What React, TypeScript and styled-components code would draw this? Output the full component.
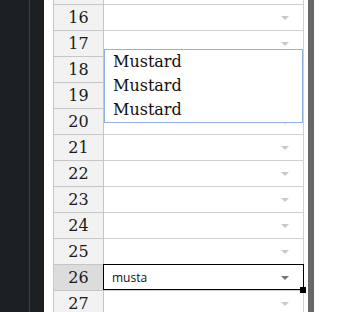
import React, { FC } from "react";
import styled, { createGlobalStyle } from "styled-components";

// row 15 is only a sliver above the fold, its number is off-screen
const rows = [15, 16, 17, 18, 19, 20, 21, 22, 23, 24, 25, 26, 27];
const firstVisible = 16;
const activeRow = 26;
const options = ["Mustard", "Mustard", "Mustard"];

const App: FC = () => {
  return (
    <>
      <GlobalStyle />
      <Page>
        <SidePanel>
          <PanelDivider />
        </SidePanel>
        <Sheet>
          {rows.map((n) => (
            <Row key={n}>
              <RowHeader active={n === activeRow}>
                {n >= firstVisible ? n : ""}
              </RowHeader>
              <Cell>
                {n === activeRow ? <CellText>musta</CellText> : <span />}
                <Arrow active={n === activeRow} />
                {n === activeRow && (
                  <ActiveFrame>
                    <FillHandle />
                  </ActiveFrame>
                )}
              </Cell>
            </Row>
          ))}
          <Suggestions>
            {options.map((o, i) => (
              <Option key={i}>{o}</Option>
            ))}
          </Suggestions>
        </Sheet>
        <ScrollBar />
      </Page>
    </>
  );
};

export default App;

const GlobalStyle = createGlobalStyle`
  html, body {
    margin: 0;
    padding: 0;
    background: #ffffff;
    overflow: hidden;
  }
  * {
    box-sizing: border-box;
  }
`;

const Page = styled.div`
  display: flex;
  align-items: flex-start;
  width: 351px;
  height: 312px;
  overflow: hidden;
`;

const SidePanel = styled.div`
  display: flex;
  width: 44px;
  height: 312px;
  background: #1d2023;
  flex-shrink: 0;
`;

const PanelDivider = styled.div`
  width: 1px;
  height: 100%;
  margin-left: 29px;
  background: #3a3d41;
`;

const Sheet = styled.div`
  position: relative;
  margin-left: 9px;
  margin-top: -22px;
  width: 251px;
  flex-shrink: 0;
`;

const Row = styled.div`
  display: flex;
  height: 26px;
`;

const RowHeader = styled.div<{ active?: boolean }>`
  width: 51px;
  height: 26px;
  border: 1px solid #c6c6c6;
  border-bottom: none;
  background: ${(p) => (p.active ? "#dcdcdc" : "#f2f2f2")};
  display: flex;
  align-items: center;
  justify-content: center;
  font-family: "DejaVu Serif", serif;
  font-size: 16px;
  line-height: 25px;
  color: #1a1a1a;
`;

const Cell = styled.div`
  position: relative;
  width: 200px;
  height: 26px;
  border-top: 1px solid #d0d0d0;
  border-right: 1px solid #d0d0d0;
  background: #ffffff;
  display: flex;
  align-items: center;
  justify-content: space-between;
  padding: 0 14px 0 8px;
`;

const CellText = styled.span`
  font-family: "Open Sans", sans-serif;
  font-size: 12px;
  line-height: 25px;
  color: #111111;
`;

const Arrow = styled.span<{ active?: boolean }>`
  width: 0;
  height: 0;
  border-left: 4px solid transparent;
  border-right: 4px solid transparent;
  border-top: 4px solid ${(p) => (p.active ? "#767676" : "#c9c9c9")};
`;

const ActiveFrame = styled.div`
  position: absolute;
  z-index: 2;
  left: -1px;
  top: -1px;
  width: 201px;
  height: 26px;
  border: 1px solid #000000;
  pointer-events: none;
`;

const FillHandle = styled.div`
  position: absolute;
  left: 196px;
  top: 22px;
  width: 6px;
  height: 6px;
  background: #000000;
`;

const Suggestions = styled.div`
  position: absolute;
  z-index: 3;
  left: 51px;
  top: 71px;
  width: 199px;
  height: 74px;
  border: 1px solid #8fb0e0;
  background: #ffffff;
  padding-left: 8px;
`;

const Option = styled.div`
  font-family: "DejaVu Serif", serif;
  font-size: 16px;
  line-height: 24px;
  color: #111111;
`;

const ScrollBar = styled.div`
  width: 6px;
  height: 312px;
  margin-left: 4px;
  background: #686868;
  flex-shrink: 0;
`;
